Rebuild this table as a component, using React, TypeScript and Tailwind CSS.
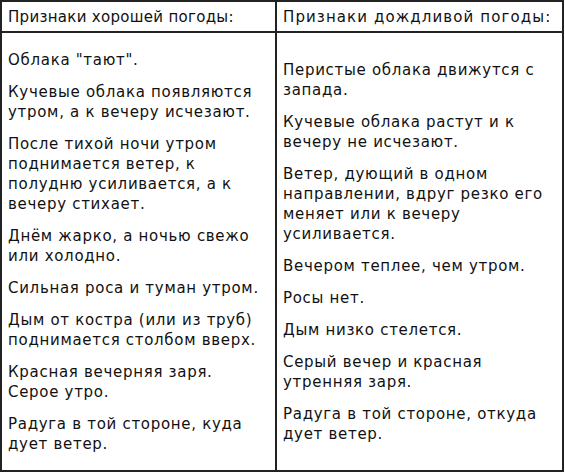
import React from 'react';

const good: string[][] = [
  ['Облака "тают".'],
  ['Кучевые облака появляются', 'утром, а к вечеру исчезают.'],
  ['После тихой ночи утром', 'поднимается ветер, к', 'полудню усиливается, а к', 'вечеру стихает.'],
  ['Днём жарко, а ночью свежо', 'или холодно.'],
  ['Сильная роса и туман утром.'],
  ['Дым от костра (или из труб)', 'поднимается столбом вверх.'],
  ['Красная вечерняя заря.', 'Серое утро.'],
  ['Радуга в той стороне, куда', 'дует ветер.'],
];

const rainy: string[][] = [
  ['Перистые облака движутся с', 'запада.'],
  ['Кучевые облака растут и к', 'вечеру не исчезают.'],
  ['Ветер, дующий в одном', 'направлении, вдруг резко его', 'меняет или к вечеру', 'усиливается.'],
  ['Вечером теплее, чем утром.'],
  ['Росы нет.'],
  ['Дым низко стелется.'],
  ['Серый вечер и красная', 'утренняя заря.'],
  ['Радуга в той стороне, откуда', 'дует ветер.'],
];

// каждая строка задана явно, как в оригинале
const Signs: React.FC<{ items: string[][] }> = ({ items }) => (
  <div className="flex flex-col gap-3">
    {items.map((lines, i) => (
      <p key={i} className="whitespace-nowrap">
        {lines.map((l, j) => (
          <span key={j} className="block">
            {l}
          </span>
        ))}
      </p>
    ))}
  </div>
);

export default function App() {
  return (
    <div className="bg-white w-[565px] h-[474px]">
      <div
        className="w-[564px] h-[472px] border-2 border-[#222] grid grid-cols-[275px_1fr] grid-rows-[31px_1fr] text-[15px] leading-[20px] text-[#111] tracking-[0.7px]"
        style={{ fontFamily: '"DejaVu Sans", Verdana, sans-serif' }}
      >
        <div className="border-r-2 border-b-2 border-[#222] pl-[6px] flex items-center tracking-[0.3px]">
          Признаки хорошей погоды:
        </div>
        <div className="border-b-2 border-[#222] pl-[6px] flex items-center tracking-[1.1px]">
          Признаки дождливой погоды:
        </div>
        <div className="border-r-2 border-[#222] pl-[6px] flex items-center">
          <Signs items={good} />
        </div>
        <div className="pl-[6px] flex items-center">
          <Signs items={rainy} />
        </div>
      </div>
    </div>
  );
}
